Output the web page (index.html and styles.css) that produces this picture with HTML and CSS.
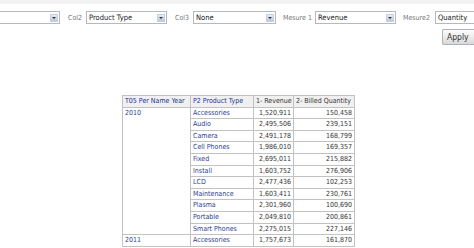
FILE: index.html
```html
<!DOCTYPE html>
<html lang="en">

<head>
    <meta charset="UTF-8">
    <title>Pivot Report</title>
    <link rel="stylesheet" href="styles.css">
</head>

<body>
    <div class="topbar"></div>

    <!-- Column and measure pickers -->
    <div class="pickers">
        <div class="sel sel-first"><span class="arrow"></span></div>
        <span class="lbl">Col2</span>
        <div class="sel"><span class="val">Product Type</span><span class="arrow"></span></div>
        <span class="lbl">Col3</span>
        <div class="sel sel-wide"><span class="val">None</span><span class="arrow"></span></div>
        <span class="lbl lbl-wide">Mesure 1</span>
        <div class="sel"><span class="val">Revenue</span><span class="arrow"></span></div>
        <span class="lbl lbl-wide">Mesure2</span>
        <div class="sel sel-last"><span class="val">Quantity</span></div>
    </div>

    <div class="actions">
        <button class="apply" type="button">Apply</button>
    </div>

    <table class="pivot">
        <colgroup>
            <col class="c1">
            <col class="c2">
            <col class="c3">
            <col class="c4">
        </colgroup>
        <thead>
            <tr>
                <th>T05 Per Name Year</th>
                <th>P2 Product Type</th>
                <th class="num">1- Revenue</th>
                <th class="num">2- Billed Quantity</th>
            </tr>
        </thead>
        <tbody>
            <tr><td rowspan="11" class="dim">2010</td><td class="dim">Accessories</td><td class="num">1,520,911</td><td class="num">150,458</td></tr>
            <tr><td class="dim">Audio</td><td class="num">2,495,506</td><td class="num">239,151</td></tr>
            <tr><td class="dim">Camera</td><td class="num">2,491,178</td><td class="num">168,799</td></tr>
            <tr><td class="dim">Cell Phones</td><td class="num">1,986,010</td><td class="num">169,357</td></tr>
            <tr><td class="dim">Fixed</td><td class="num">2,695,011</td><td class="num">215,882</td></tr>
            <tr><td class="dim">Install</td><td class="num">1,603,752</td><td class="num">276,906</td></tr>
            <tr><td class="dim">LCD</td><td class="num">2,477,436</td><td class="num">102,253</td></tr>
            <tr><td class="dim">Maintenance</td><td class="num">1,603,411</td><td class="num">230,761</td></tr>
            <tr><td class="dim">Plasma</td><td class="num">2,301,960</td><td class="num">100,690</td></tr>
            <tr><td class="dim">Portable</td><td class="num">2,049,810</td><td class="num">200,861</td></tr>
            <tr><td class="dim">Smart Phones</td><td class="num">2,275,015</td><td class="num">227,146</td></tr>
            <tr><td class="dim">2011</td><td class="dim">Accessories</td><td class="num">1,757,673</td><td class="num">161,870</td></tr>
        </tbody>
    </table>
</body>

</html>
```

FILE: styles.css
```css
/* Page */
body {
    margin: 0;
    font-family: "DejaVu Sans Condensed", "Liberation Sans", sans-serif;
    background-color: #fff;
    overflow: hidden;
}

.topbar {
    height: 4px;
    background-color: #f2f2f2;
}

/* Picker row */
.pickers {
    display: flex;
    align-items: center;
    margin: 7px 0 0 -21px;
    white-space: nowrap;
}

.lbl {
    flex-shrink: 0;
    width: 15px;
    font-size: 7px;
    color: #777;
    margin: 0 3px 0 8px;
}

.lbl-wide {
    width: 29px;
    margin: 0 3px 0 7px;
}

.sel {
    display: flex;
    align-items: center;
    justify-content: space-between;
    box-sizing: border-box;
    width: 81px;
    height: 13px;
    border: 1px solid #b4b9c0;
    background-color: #fff;
    padding: 0 1px 0 2px;
    flex-shrink: 0;
}

.sel-first {
    width: 81px;
    justify-content: flex-end;
}

.sel-wide {
    width: 83px;
}

.sel-last {
    width: 44px;
    border-right: none;
}

.val {
    font-size: 7.5px;
    color: #222;
}

.arrow {
    width: 6px;
    height: 6px;
    background: linear-gradient(#e4ecf6, #b9c8dc);
    border: 1px solid #c6cfdb;
    position: relative;
}

.arrow::after {
    content: "";
    position: absolute;
    left: 1px;
    top: 2px;
    border-left: 2px solid transparent;
    border-right: 2px solid transparent;
    border-top: 2px solid #334;
}

/* Apply button */
.actions {
    display: flex;
    justify-content: flex-end;
    margin-top: 5px;
}

.apply {
    box-sizing: border-box;
    width: 32px;
    height: 16px;
    padding: 0 0 0 4px;
    font-family: inherit;
    font-size: 8.5px;
    color: #333;
    text-align: left;
    background: linear-gradient(#fdfdfd, #d9d9d9);
    border: 1px solid #aeb3b9;
    border-right: none;
    border-radius: 2px 0 0 2px;
}

/* Pivot table */
.pivot {
    margin: 50px 0 0 122px;
    border-collapse: collapse;
    table-layout: fixed;
    width: 232px;
    font-size: 7px;
}

.pivot .c1 { width: 68px; }
.pivot .c2 { width: 63px; }
.pivot .c3 { width: 40px; }
.pivot .c4 { width: 61px; }

.pivot th,
.pivot td {
    border: 1px solid #c2c2c2;
    padding: 0 2px;
    line-height: 10.6px;
    text-align: left;
    vertical-align: top;
    white-space: nowrap;
    overflow: hidden;
    font-weight: normal;
}

.pivot th {
    background-color: #f0f0f0;
    color: #23358a;
}

.pivot th.num {
    color: #333;
}

.pivot .dim {
    color: #2a3d95;
}

.pivot td.num {
    text-align: right;
    color: #333;
}
```
